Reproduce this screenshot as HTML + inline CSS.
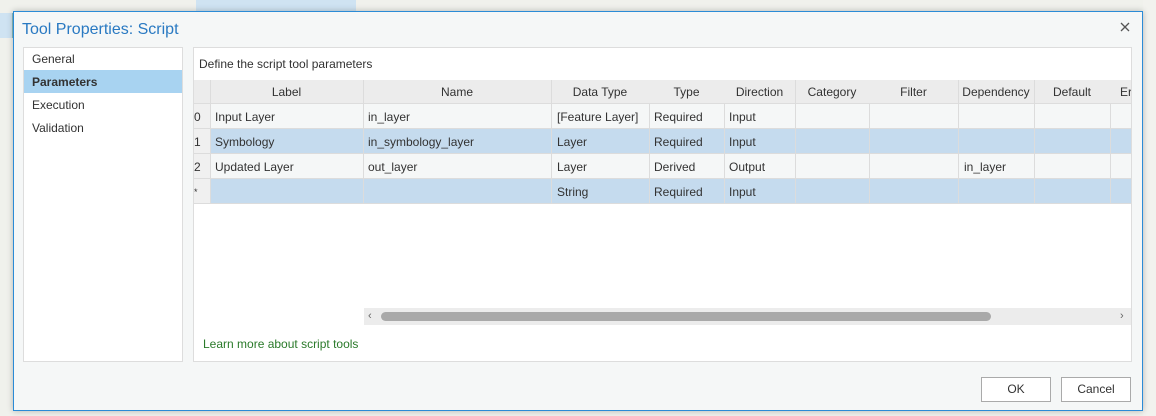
<!DOCTYPE html>
<html><head><meta charset="utf-8"><style>
*{margin:0;padding:0;box-sizing:border-box}
body{width:1156px;height:416px;overflow:hidden;background:#f0f1ec;font-family:"Liberation Sans",sans-serif;font-size:12px;color:#323232;position:relative}
.a{position:absolute}
.dlg{left:13px;top:11px;width:1130px;height:400px;background:#f5f7f7;border:1px solid #2b8bd6;box-shadow:0 0 6px rgba(0,0,0,.25)}
.t{position:absolute;white-space:nowrap;line-height:24px}
.hl{background:#c5dbee}
</style></head><body>
<div class="a" style="left:196px;top:0;width:160px;height:11px;background:#cfe3f2"></div>
<div class="a" style="left:0;top:13px;width:13px;height:25px;background:#cfe3f2;border-right:1px solid #8bb"></div>
<div class="a" style="left:1143px;top:0;width:13px;height:416px;background:#f2f2ee"></div>
<div class="a dlg"></div>
<div class="a" style="left:22px;top:21px;font-size:16px;color:#2979c2">Tool Properties: Script</div>
<svg class="a" style="left:1120px;top:22px" width="10" height="10"><path d="M1 1L9 9M9 1L1 9" stroke="#555" stroke-width="1.3"/></svg>
<!-- left panel -->
<div class="a" style="left:23px;top:47px;width:160px;height:315px;background:#fff;border:1px solid #ddd"></div>
<div class="a" style="left:24px;top:70px;width:158px;height:23px;background:#a8d3f1"></div>
<div class="t" style="left:32px;top:47px">General</div>
<div class="t" style="left:32px;top:70px;font-weight:bold">Parameters</div>
<div class="t" style="left:32px;top:93px">Execution</div>
<div class="t" style="left:32px;top:116px">Validation</div>
<!-- right panel -->
<div class="a" style="left:193px;top:47px;width:939px;height:315px;background:#fff;border:1px solid #ddd"></div>
<div class="t" style="left:199px;top:52px">Define the script tool parameters</div>
<!-- table -->
<div class="a" style="left:194px;top:80px;width:937px;height:24px;background:#ececec;border-bottom:1px solid #ddd"></div>
<div class="a" style="left:194px;top:104px;width:16px;height:100px;background:#f0f0f0"></div>
<div class="a" style="left:210px;top:104px;width:921px;height:25px;background:#f5f7f7"></div>
<div class="a hl" style="left:210px;top:129px;width:921px;height:25px"></div>
<div class="a" style="left:210px;top:154px;width:921px;height:25px;background:#f5f7f7"></div>
<div class="a hl" style="left:210px;top:179px;width:921px;height:25px"></div>
<svg class="a" style="left:0;top:0" width="1156" height="416">
<g stroke="#dcdcdc" stroke-width="1">
<line x1="194" y1="128.5" x2="1131" y2="128.5"/><line x1="194" y1="153.5" x2="1131" y2="153.5"/><line x1="194" y1="178.5" x2="1131" y2="178.5"/><line x1="194" y1="203.5" x2="1131" y2="203.5"/>
<line x1="210.5" y1="80" x2="210.5" y2="204"/><line x1="363.5" y1="80" x2="363.5" y2="204"/><line x1="551.5" y1="80" x2="551.5" y2="204"/><line x1="649.5" y1="104" x2="649.5" y2="204"/><line x1="724.5" y1="104" x2="724.5" y2="204"/><line x1="795.5" y1="80" x2="795.5" y2="204"/><line x1="869.5" y1="104" x2="869.5" y2="204"/><line x1="958.5" y1="80" x2="958.5" y2="204"/><line x1="1034.5" y1="80" x2="1034.5" y2="204"/><line x1="1110.5" y1="104" x2="1110.5" y2="204"/>
</g></svg>
<div class="t" style="left:210px;top:80px;width:153px;text-align:center">Label</div>
<div class="t" style="left:363px;top:80px;width:188px;text-align:center">Name</div>
<div class="t" style="left:551px;top:80px;width:98px;text-align:center">Data Type</div>
<div class="t" style="left:649px;top:80px;width:75px;text-align:center">Type</div>
<div class="t" style="left:724px;top:80px;width:71px;text-align:center">Direction</div>
<div class="t" style="left:795px;top:80px;width:74px;text-align:center">Category</div>
<div class="t" style="left:869px;top:80px;width:89px;text-align:center">Filter</div>
<div class="t" style="left:958px;top:80px;width:76px;text-align:center">Dependency</div>
<div class="t" style="left:1034px;top:80px;width:76px;text-align:center">Default</div>
<div class="t" style="left:1120px;top:80px;width:11px;overflow:hidden">Er</div>
<div class="t" style="left:194px;top:105px">0</div><div class="t" style="left:215px;top:105px">Input Layer</div><div class="t" style="left:368px;top:105px">in_layer</div><div class="t" style="left:557px;top:105px">[Feature Layer]</div><div class="t" style="left:654px;top:105px">Required</div><div class="t" style="left:729px;top:105px">Input</div>
<div class="t" style="left:194px;top:130px">1</div><div class="t" style="left:215px;top:130px">Symbology</div><div class="t" style="left:368px;top:130px">in_symbology_layer</div><div class="t" style="left:557px;top:130px">Layer</div><div class="t" style="left:654px;top:130px">Required</div><div class="t" style="left:729px;top:130px">Input</div>
<div class="t" style="left:194px;top:155px">2</div><div class="t" style="left:215px;top:155px">Updated Layer</div><div class="t" style="left:368px;top:155px">out_layer</div><div class="t" style="left:557px;top:155px">Layer</div><div class="t" style="left:654px;top:155px">Derived</div><div class="t" style="left:729px;top:155px">Output</div><div class="t" style="left:964px;top:155px">in_layer</div>
<div class="t" style="left:194px;top:180px;font-size:9px">*</div><div class="t" style="left:557px;top:180px">String</div><div class="t" style="left:654px;top:180px">Required</div><div class="t" style="left:729px;top:180px">Input</div>
<!-- scrollbar -->
<div class="a" style="left:364px;top:308px;width:767px;height:17px;background:#ececec"></div>
<div class="a" style="left:381px;top:312px;width:610px;height:9px;background:#a9a9a9;border-radius:5px"></div>
<div class="t" style="left:368px;top:304px;color:#666;font-size:11px">‹</div>
<div class="t" style="left:1120px;top:304px;color:#666;font-size:11px">›</div>
<div class="t" style="left:203px;top:332px;color:#2a7a2a">Learn more about script tools</div>
<div class="a" style="left:981px;top:377px;width:70px;height:25px;background:#fff;border:1px solid #aaa;text-align:center;line-height:23px">OK</div>
<div class="a" style="left:1061px;top:377px;width:70px;height:25px;background:#fff;border:1px solid #aaa;text-align:center;line-height:23px">Cancel</div>
</body></html>
